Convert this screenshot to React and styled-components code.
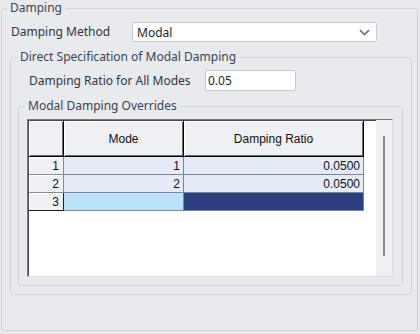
import React from "react";
import styled, { createGlobalStyle } from "styled-components";

const Global = createGlobalStyle`
  html, body { margin: 0; padding: 0; background: #e9eaee; }
  body { font-family: "Noto Sans", "Open Sans", sans-serif; font-size: 12px; color: #2b2f3a; }
  * { box-sizing: border-box; }
`;

const Page = styled.div`
  width: 420px;
  height: 334px;
  padding: 1px 2px 0 1px;
  overflow: hidden;
`;

const Group = styled.fieldset`
  margin: ${(p) => p.$margin || "0"};
  padding: ${(p) => p.$padding};
  border: 1px solid #d2d4da;
  border-radius: 3px;
  min-width: 0;
`;

const Legend = styled.legend`
  padding: 0 3px;
  margin-left: ${(p) => p.$shift}px;
  font-size: 12px;
  line-height: 14px;
  color: #3a4454;
`;

const Row = styled.div`
  display: flex;
  align-items: center;
  height: ${(p) => p.$h}px;
`;

const Label = styled.span`
  width: ${(p) => p.$w}px;
  padding-left: ${(p) => p.$indent || 0}px;
  line-height: 14px;
  color: #2f3544;
  flex: none;
`;

const Select = styled.div`
  width: 245px;
  height: 20px;
  background: #fff;
  border: 1px solid #c8cacf;
  border-radius: 2px;
  display: flex;
  align-items: center;
  justify-content: space-between;
  padding: 0 6px 0 4px;
  color: #1e2430;
`;

const TextBox = styled.div`
  width: 91px;
  height: 21px;
  background: #fff;
  border: 1px solid #c8cacf;
  border-radius: 2px;
  display: flex;
  align-items: center;
  padding-left: 2px;
  color: #1e2430;
`;

const Frame = styled.div`
  height: 158px;
  display: flex;
  border-top: 1px solid #7a7a7a;
  border-left: 1px solid #7a7a7a;
  border-right: 1px solid #dcdcdc;
  border-bottom: 1px solid #dcdcdc;
  box-shadow: inset 1px 1px 0 #4a4a4a;
  background: #fff;
`;

const TableArea = styled.div`
  flex: 1;
  padding: 1px 0 0 1px;
  overflow: hidden;
`;

const Table = styled.table`
  border-collapse: separate;
  border-spacing: 0;
  font-family: "Liberation Sans", Arial, sans-serif;
  font-size: 12px;
  color: #111;
  table-layout: fixed;
`;

const HeadCell = styled.th`
  width: ${(p) => p.$w}px;
  height: 36px;
  padding: 0;
  font-weight: normal;
  background: #eef0f4;
  border-right: 1px solid #000;
  border-bottom: 1px solid #000;
  box-shadow: inset 1px 1px 0 #fff, inset -1px -1px 0 #6a6a6a;
  text-align: center;
`;

const RowHead = styled.td`
  height: 18px;
  padding: 0 4px 0 0;
  text-align: right;
  background: #eef0f4;
  border-right: 1px solid ${(p) => (p.$active ? "#1c1c1c" : "#8c8c8c")};
  border-bottom: 1px solid ${(p) => (p.$active ? "#1c1c1c" : "#8c8c8c")};
  box-shadow: inset 1px 1px 0 #fff;
`;

const Cell = styled.td`
  height: 18px;
  padding: 0 3px 0 0;
  text-align: right;
  background: ${(p) => p.$bg || "#e5ecf7"};
  border-right: 1px solid #7c8590;
  border-bottom: 1px solid #7c8590;
`;

const Scroll = styled.div`
  width: 16px;
  background: #f0f0f0;
  display: flex;
  justify-content: center;
  padding-top: 16px;
`;

const Thumb = styled.div`
  width: 2px;
  height: 120px;
  background: #8a8a8a;
`;

const Chevron = () => (
  <svg width="11" height="7" viewBox="0 0 11 7">
    <path d="M1 1.2 L5.5 5.5 L10 1.2" fill="none" stroke="#6f737c" strokeWidth="1.7" />
  </svg>
);

const rows = [
  { n: 1, mode: "1", ratio: "0.0500" },
  { n: 2, mode: "2", ratio: "0.0500" },
];

export default function App() {
  return (
    <Page>
      <Global />
      <Group $padding="7px 5px 35px 8px">
        <Legend $shift={-3}>Damping</Legend>
        <Row $h={20}>
          <Label $w={122} $indent={1}>Damping Method</Label>
          <Select>
            <span>Modal</span>
            <Chevron />
          </Select>
        </Row>
        <Group $margin="8px 0 0 0" $padding="6px 8px 8px 7px">
          <Legend $shift={-1}>Direct Specification of Modal Damping</Legend>
          <Row $h={21}>
            <Label $w={187} $indent={11}>Damping Ratio for All Modes</Label>
            <TextBox>0.05</TextBox>
          </Row>
          <Group $margin="8px 0 0 0" $padding="6px 9px 8px 8px">
            <Legend $shift={-2}>Modal Damping Overrides</Legend>
            <Frame>
              <TableArea>
                <Table>
                  <thead>
                    <tr>
                      <HeadCell $w={35} />
                      <HeadCell $w={120}>Mode</HeadCell>
                      <HeadCell $w={180}>Damping Ratio</HeadCell>
                    </tr>
                  </thead>
                  <tbody>
                    {rows.map((r) => (
                      <tr key={r.n}>
                        <RowHead>{r.n}</RowHead>
                        <Cell>{r.mode}</Cell>
                        <Cell>{r.ratio}</Cell>
                      </tr>
                    ))}
                    <tr>
                      <RowHead $active>3</RowHead>
                      <Cell $bg="#bde3fc" />
                      <Cell $bg="#2b3e80" />
                    </tr>
                  </tbody>
                </Table>
              </TableArea>
              <Scroll>
                <Thumb />
              </Scroll>
            </Frame>
          </Group>
        </Group>
      </Group>
    </Page>
  );
}
